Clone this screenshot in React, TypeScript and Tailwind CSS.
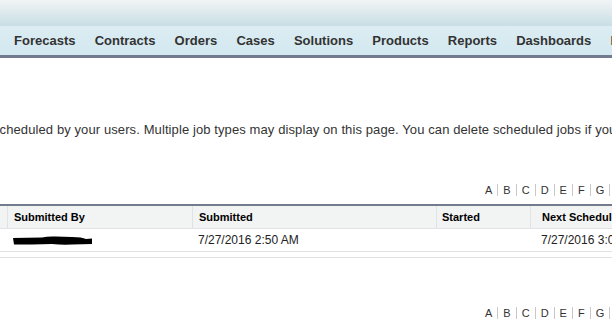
const tabs = ["Forecasts", "Contracts", "Orders", "Cases", "Solutions", "Products", "Reports", "Dashboards", "Ideas"]
const letters = ["A", "B", "C", "D", "E", "F", "G", "H", "I", "J", "K", "L", "M"]

function AlphaBar() {
  return (
    <div className="flex whitespace-nowrap pl-[482px] text-[11px] leading-[14px] text-[#333]">
      {letters.map((l) => (
        <span key={l} className="flex items-center">
          <span className="px-[3px]">{l}</span>
          <span className="h-[12px] w-px bg-[#c8c8c8] mx-[2px]" />
        </span>
      ))}
    </div>
  )
}

export default function App() {
  return (
    <div className="w-[612px] h-[321px] overflow-hidden bg-white font-['Liberation_Sans',Arial,sans-serif]">
      {/* header */}
      <div className="h-[26px] bg-gradient-to-b from-[#f1f4f5] to-[#c8dee5]" />
      <div className="h-[29px] bg-gradient-to-b from-[#dcedf3] to-[#d3e8ef] flex items-center whitespace-nowrap pl-[4.5px]">
        {tabs.map((t) => (
          <span key={t} className="px-[9.6px] text-[13px] font-bold text-[#333]">
            {t}
          </span>
        ))}
      </div>
      <div className="h-[3px] bg-[#737b8e]" />

      {/* description */}
      <p className="mt-[64px] ml-[-7px] whitespace-nowrap text-[13px] leading-[16px] tracking-[0.1px] text-[#333]">
        scheduled by your users. Multiple job types may display on this page. You can delete scheduled jobs if you have the permission to do so.
      </p>

      <div className="mt-[45px]">
        <AlphaBar />
      </div>

      {/* table */}
      <div className="mt-[7px] w-[760px] border-t-2 border-[#737b8e]">
        <div className="flex h-[23px] bg-[#f2f3f3] border-b border-[#e0e3e5] text-[11px] font-bold text-black">
          <div className="w-[8px] border-r border-[#e0e3e5]" />
          <div className="w-[185px] border-r border-[#e0e3e5] flex items-center pl-[6px]">Submitted By</div>
          <div className="w-[244px] border-r border-[#e0e3e5] flex items-center pl-[6px]">Submitted</div>
          <div className="w-[94px] border-r border-[#e0e3e5] flex items-center pl-[5px]">Started</div>
          <div className="flex-1 flex items-center pl-[11px]">Next Scheduled Run</div>
        </div>
        <div className="flex h-[23px] border-b border-[#e0e3e5] text-[12px] text-[#222]">
          <div className="w-[8px]" />
          <div className="w-[185px] flex items-center pl-[4px]">
            <svg width="82" height="12" viewBox="0 0 82 12">
              <path d="M1 4 L30 3.5 Q36 2 44 2.5 L60 3 Q70 3 74 5 L80 4.5 L80 10 L60 10.5 Q50 11 40 10 L20 10.5 L2 10.5 Z" fill="#000" />
            </svg>
          </div>
          <div className="w-[244px] flex items-center pl-[5px]">7/27/2016 2:50 AM</div>
          <div className="w-[94px]" />
          <div className="flex-1 flex items-center pl-[10px]">7/27/2016 3:00 AM</div>
        </div>
        <div className="h-[6px] border-b border-[#e0e3e5]" />
      </div>

      <div className="mt-[48px]">
        <AlphaBar />
      </div>
    </div>
  )
}
